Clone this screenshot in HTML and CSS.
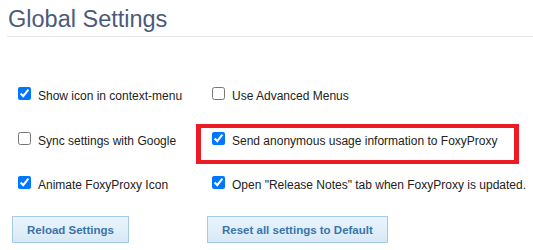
FILE: index.html
```html
<!DOCTYPE html>
<html lang="en">
<head>
    <meta charset="UTF-8">
    <meta name="viewport" content="width=device-width, initial-scale=1.0">
    <title>Global Settings</title>
    <link rel="stylesheet" href="styles.css">
</head>
<body>
    <div class="page">
        <h1 class="page-title">Global Settings</h1>

        <!-- Options -->
        <div class="options">
            <label class="option"><input type="checkbox" checked>Show icon in context-menu</label>
            <label class="option"><input type="checkbox">Use Advanced Menus</label>
            <label class="option"><input type="checkbox">Sync settings with Google</label>
            <label class="option highlight"><input type="checkbox" checked>Send anonymous usage information to FoxyProxy</label>
            <label class="option"><input type="checkbox" checked>Animate FoxyProxy Icon</label>
            <label class="option"><input type="checkbox" checked>Open "Release Notes" tab when FoxyProxy is updated.</label>
        </div>

        <!-- Actions -->
        <div class="actions">
            <div><button class="btn">Reload Settings</button></div>
            <div><button class="btn">Reset all settings to Default</button></div>
        </div>
    </div>
</body>
</html>
```

FILE: styles.css
```css
body {
    font-family: "Liberation Sans", Arial, sans-serif;
    margin: 0;
    padding: 0;
    background-color: #fff;
    color: #222;
}

.page {
    padding-left: 7px;
}

.page-title {
    margin: 6px 0 0 0;
    padding: 0 0 4px 1px;
    font-size: 23.5px;
    font-weight: normal;
    line-height: 26px;
    color: #4c5a79;
    border-bottom: 1px solid #e6e6e6;
}

/* Checkbox grid */
.options {
    display: grid;
    grid-template-columns: 194px auto;
    row-gap: 26.5px;
    margin-top: 50px;
    padding-left: 11px;
}

.option {
    display: block;
    justify-self: start;
    font-size: 12px;
    line-height: 17px;
    white-space: nowrap;
}

.option input {
    margin: 0 7px 0 0;
    width: 13px;
    height: 13px;
    vertical-align: baseline;
}

/* Red box drawn over the highlighted option */
.highlight {
    position: relative;
}

.highlight::after {
    content: "";
    position: absolute;
    top: -8px;
    left: -16px;
    right: -22px;
    bottom: -14px;
    border: 4px solid #ed1c24;
    border-left-width: 5px;
    border-right-width: 5px;
}

/* Buttons */
.actions {
    display: grid;
    grid-template-columns: 195px auto;
    margin-top: 22px;
    padding-left: 5px;
}

.btn {
    height: 27px;
    padding: 0 14px;
    font-family: "Liberation Sans", Arial, sans-serif;
    font-size: 11.5px;
    font-weight: bold;
    color: #3a74aa;
    background: linear-gradient(#e9f4fc, #e1eff9 50%, #d6e9f7);
    border: 1px solid #a6cbe6;
    border-radius: 0;
    cursor: pointer;
}

.btn:hover {
    background: #d6e9f7;
}
```
